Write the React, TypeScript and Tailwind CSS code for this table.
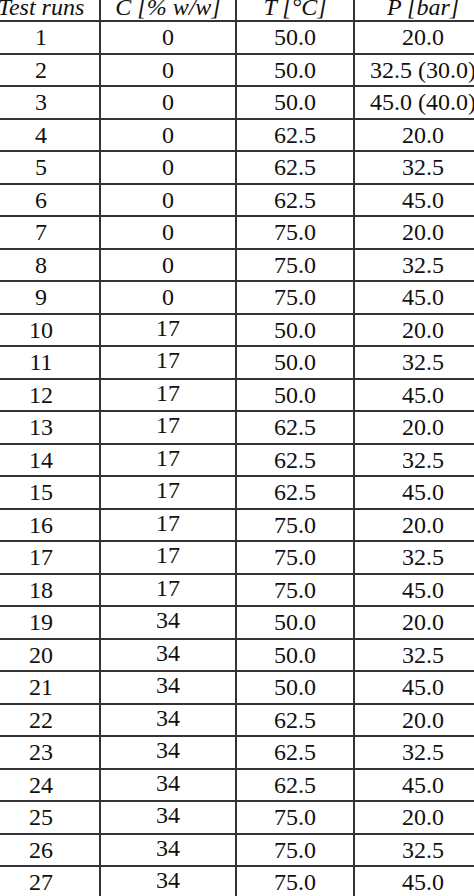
const rows: [string, string, string, string][] = [];
const temps = ["50.0", "62.5", "75.0"];
const pressures = ["20.0", "32.5", "45.0"];
["0", "17", "34"].forEach((c) => {
  temps.forEach((t) => {
    pressures.forEach((p) => {
      rows.push([String(rows.length + 1), c, t, p]);
    });
  });
});
rows[1][3] = "32.5 (30.0)";
rows[2][3] = "45.0 (40.0)";

const cols = ["w-[101px] pr-[17px]", "w-[136px]", "w-[118px]", "w-[136px]"];

function Cell({ i, children, raise }: { i: number; children: React.ReactNode; raise?: boolean }) {
  return (
    <div
      className={`flex shrink-0 items-center justify-center whitespace-nowrap ${cols[i]} ${
        i < 3 ? "border-r-2 border-[#333]" : ""
      }`}
    >
      <span className={`leading-[24px] ${raise ? "mb-[4px]" : ""}`}>{children}</span>
    </div>
  );
}

export default function App() {
  return (
    <div
      className="h-[896px] w-[474px] overflow-hidden bg-white text-[24px] text-[#111]"
      style={{ fontFamily: '"Liberation Serif", "Times New Roman", serif' }}
    >
      <div className="flex h-[22px] border-b-2 border-[#333] italic">
        {["Test runs", "C [% w/w]", "T [°C]", "P [bar]"].map((h, i) => (
          <div
            key={h}
            className={`flex shrink-0 items-start justify-center whitespace-nowrap ${cols[i]} ${
              i < 3 ? "border-r-2 border-[#333]" : ""
            }`}
          >
            <span className="-mt-[5px] leading-[24px]">{h}</span>
          </div>
        ))}
      </div>
      {rows.map((r) => (
        <div key={r[0]} className="flex h-[32.5px] border-b-2 border-[#333]">
          {r.map((v, i) => (
            <Cell key={i} i={i} raise={i === 1 && v !== "0"}>
              {v}
            </Cell>
          ))}
        </div>
      ))}
    </div>
  );
}
